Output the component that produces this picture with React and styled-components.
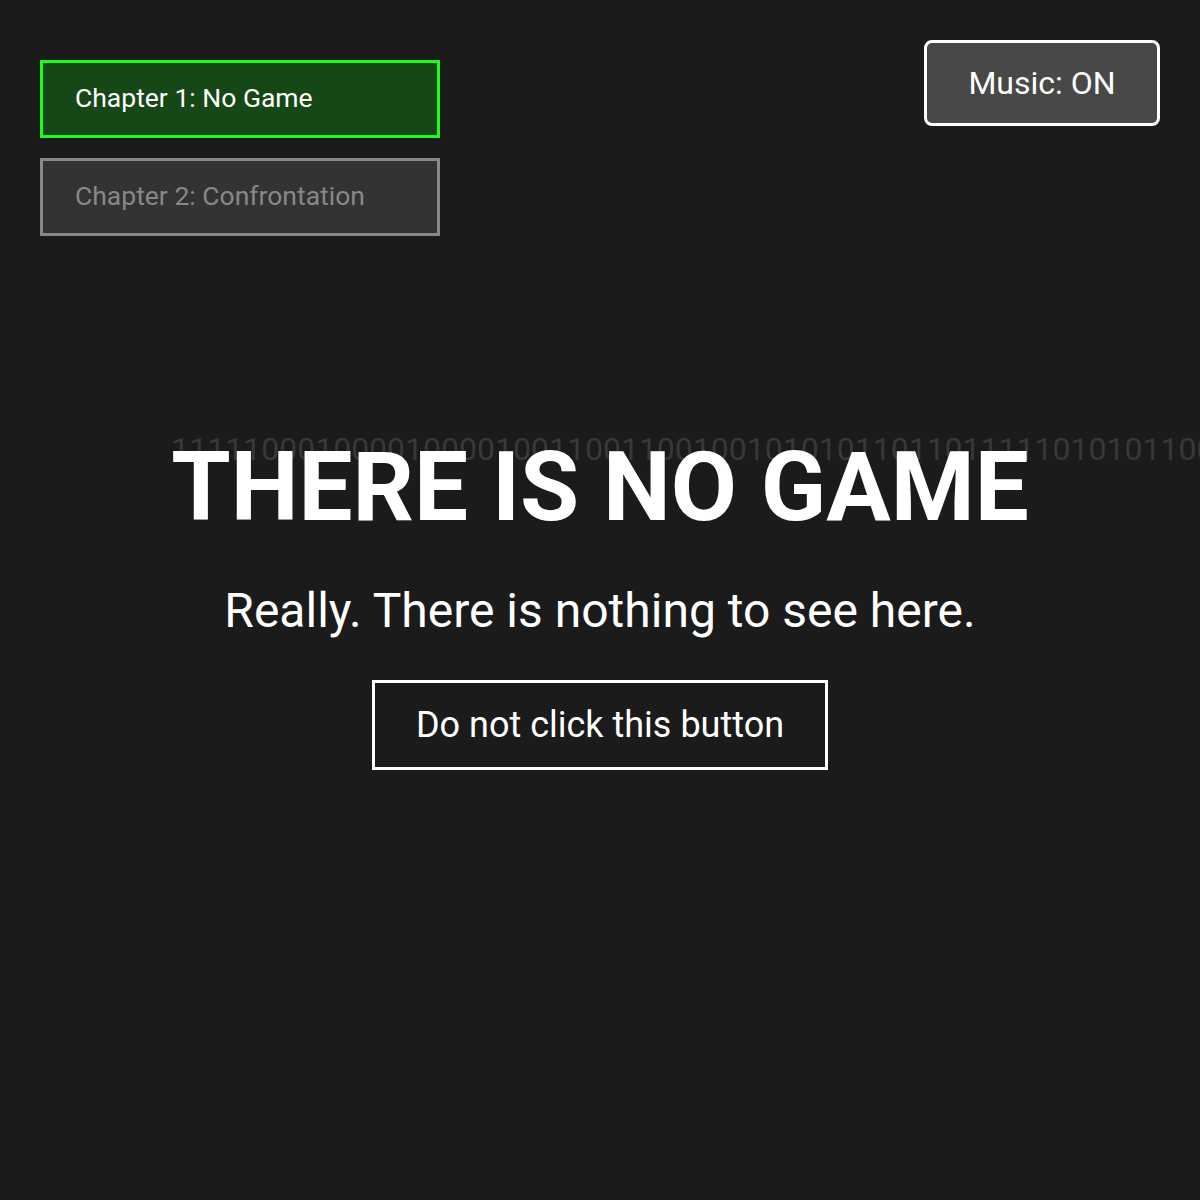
import styled, { createGlobalStyle } from "styled-components";

const GlobalStyle = createGlobalStyle`
  html, body {
    margin: 0;
    padding: 0;
    background: #1b1b1b;
    color: #fff;
    font-family: Roboto, "Noto Sans", sans-serif;
  }
`;

const Stage = styled.div`
  display: grid;
  min-height: 100vh;
  overflow: hidden;
  & > * {
    grid-area: 1 / 1;
  }
`;

const TopBar = styled.header`
  align-self: start;
  display: flex;
  justify-content: space-between;
  align-items: flex-start;
  padding: 40px;
  z-index: 1;
`;

const ChapterList = styled.nav`
  display: flex;
  flex-direction: column;
  gap: 20px;
  margin-top: 20px;
`;

const ChapterButton = styled.button`
  width: 400px;
  height: 78px;
  box-sizing: border-box;
  padding: 0 32px 3px;
  text-align: left;
  font-family: inherit;
  font-size: 26.5px;
  border: 3px solid ${(p) => (p.$active ? "#19ff19" : "#888")};
  background: ${(p) => (p.$active ? "#164716" : "#333")};
  color: ${(p) => (p.$active ? "#fff" : "#888")};
  cursor: pointer;
`;

const MusicToggle = styled.button`
  width: 236px;
  height: 86px;
  box-sizing: border-box;
  border: 3px solid #fff;
  border-radius: 8px;
  background: #484848;
  color: #fff;
  font-family: inherit;
  font-size: 32px;
  cursor: pointer;
`;

const Main = styled.main`
  align-self: center;
  display: flex;
  flex-direction: column;
  align-items: center;
  text-align: center;
`;

const Title = styled.h1`
  position: relative;
  margin: 0;
  font-size: 96px;
  font-weight: 700;
  line-height: 1.2;
`;

const Binary = styled.span`
  position: absolute;
  left: 0;
  top: 3px;
  font-size: 32px;
  font-weight: 400;
  line-height: 1;
  color: #383838;
  white-space: nowrap;
`;

const TitleText = styled.span`
  position: relative;
`;

const Subtitle = styled.p`
  margin: 37px 0 40px;
  font-size: 48px;
  line-height: 1.2;
`;

const TrapButton = styled.button`
  padding: 21px 41px;
  border: 3px solid #fff;
  background: transparent;
  color: #fff;
  font-family: inherit;
  font-size: 36px;
  cursor: pointer;
`;

const bits =
  "1111100010000100001001100110010010101011011011111010101100101101";

export default function App() {
  return (
    <Stage>
      <GlobalStyle />
      <TopBar>
        <ChapterList>
          <ChapterButton $active>Chapter 1: No Game</ChapterButton>
          <ChapterButton>Chapter 2: Confrontation</ChapterButton>
        </ChapterList>
        <MusicToggle>Music: ON</MusicToggle>
      </TopBar>
      <Main>
        <Title>
          <Binary aria-hidden="true">{bits}</Binary>
          <TitleText>THERE IS NO GAME</TitleText>
        </Title>
        <Subtitle>Really. There is nothing to see here.</Subtitle>
        <TrapButton>Do not click this button</TrapButton>
      </Main>
    </Stage>
  );
}
